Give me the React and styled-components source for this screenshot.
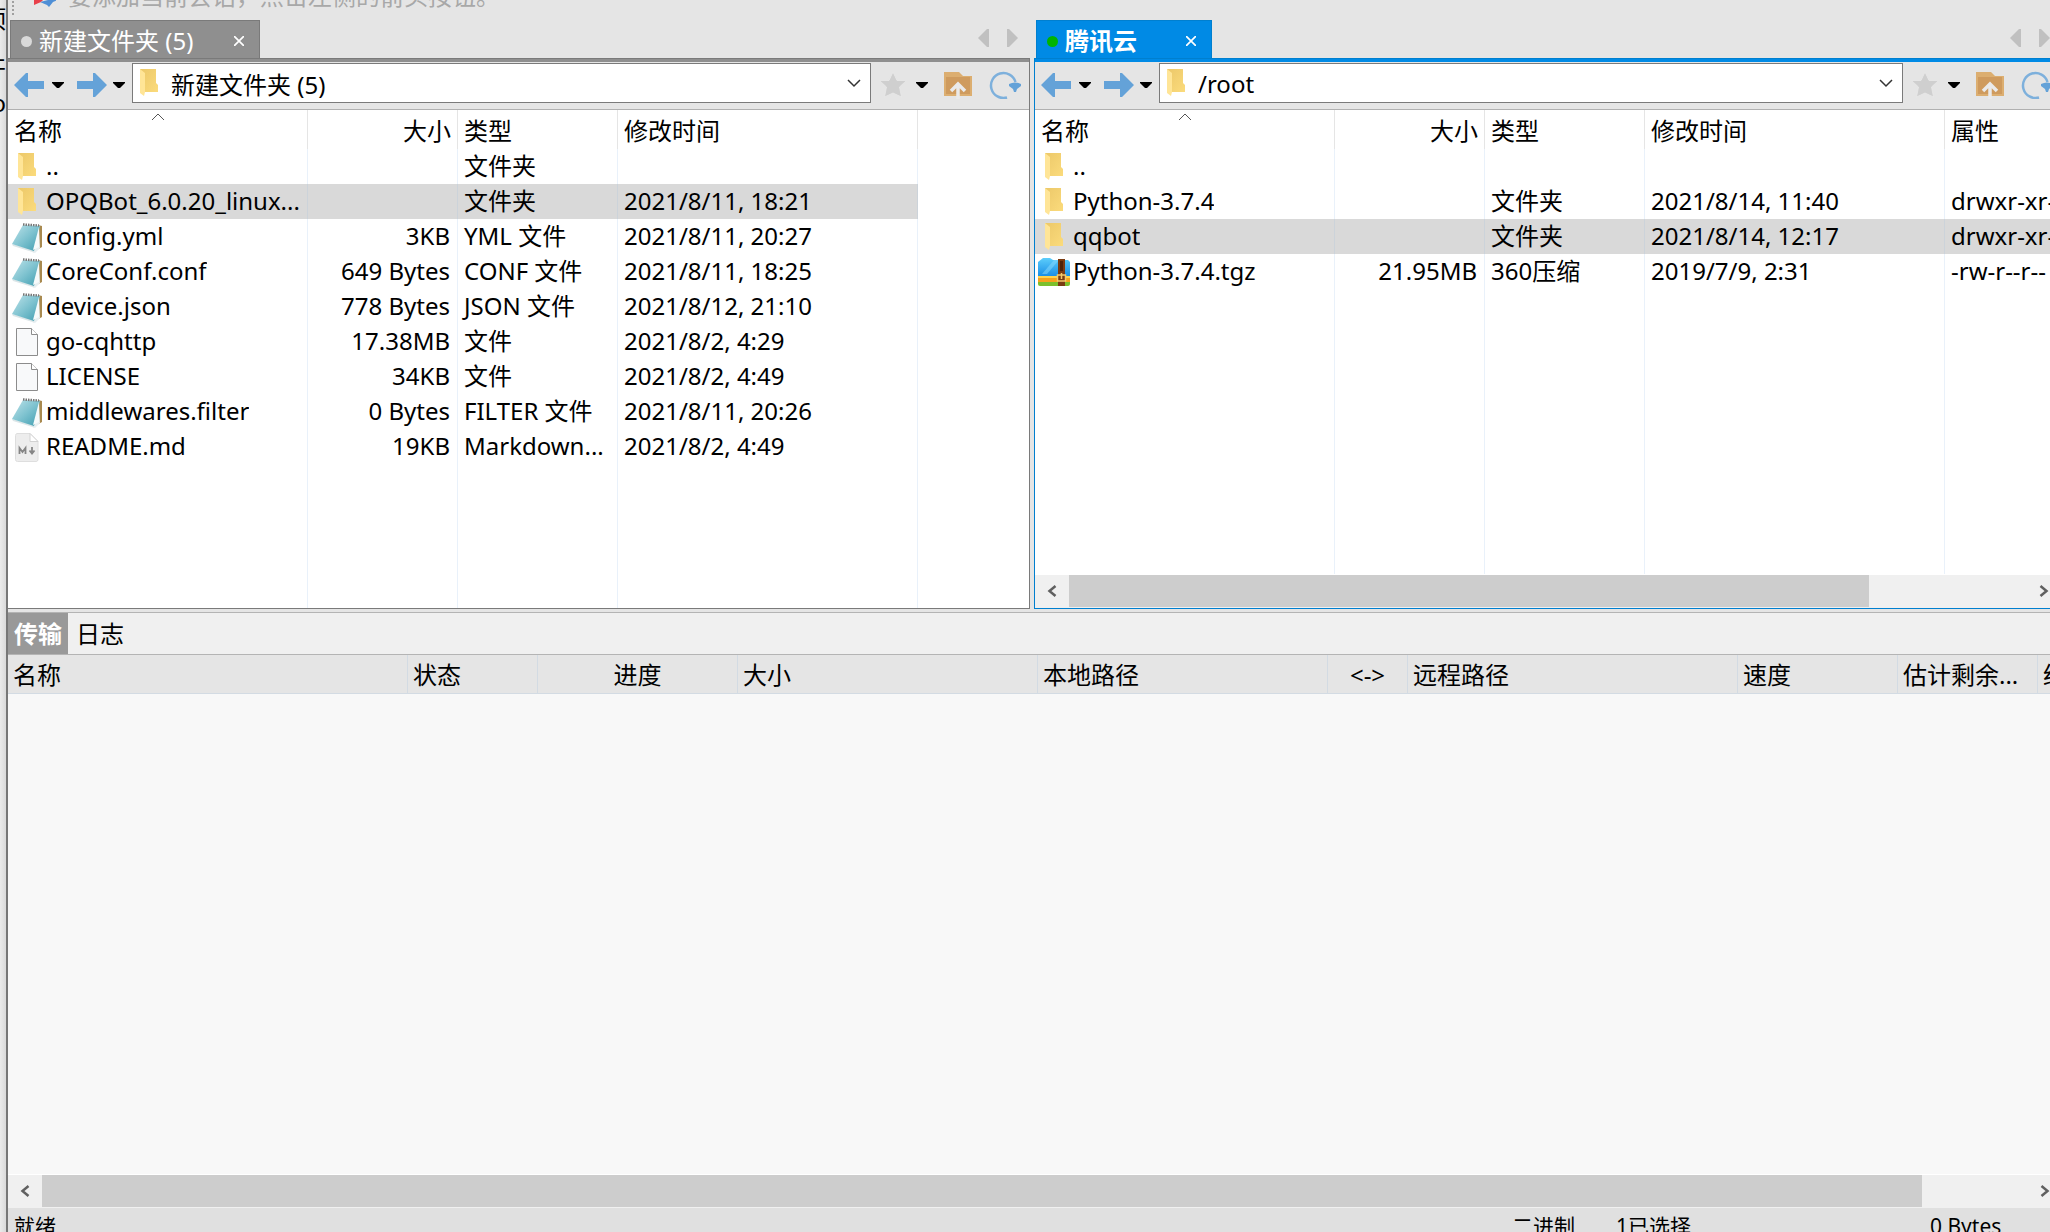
import React from 'react';
import styled, { createGlobalStyle, css } from 'styled-components';

const Global = createGlobalStyle`
  *, *::before, *::after { box-sizing: border-box; }
  html, body, #root { height: 100%; }
  body {
    margin: 0;
    overflow: hidden;
    background: #e5e5e5;
    color: #000;
    font: 24px/32px "Noto Sans", "Noto Sans CJK SC", sans-serif;
  }
  button, input { font: inherit; color: inherit; }
  button { padding: 0; border: 0; background: none; }
  svg { display: block; flex: none; }
`;

const Screen = styled.div`
  display: flex;
  height: 100%;
  overflow: hidden;
`;

const Backdrop = styled.div`
  flex: none;
  width: 6px;
  height: 100%;
  overflow: hidden;
  background: linear-gradient(90deg, #ebebeb, #dadada);
  direction: rtl;
`;

const BackdropGlyph = styled.div`
  height: ${(p) => p.$height}px;
  line-height: ${(p) => p.$height}px;
  white-space: nowrap;
`;

const Window = styled.div`
  flex: none;
  display: flex;
  flex-direction: column;
  width: calc(100% + 6px);
  height: calc(100% + 12px);
  border-left: 2px solid #777;
  background: #e5e5e5;
`;

const Notice = styled.div`
  flex: none;
  display: flex;
  align-items: flex-end;
  gap: 12px;
  height: 20px;
  padding: 0 4px;
  overflow: hidden;
  color: #a8a8a8;
`;

const NoticeText = styled.span`
  height: 32px;
  margin-bottom: 8px;
`;

const Panes = styled.div`
  flex: none;
  display: grid;
  grid-template-columns: calc(50% - 5px) 1fr;
  gap: 4px;
  height: 589px;
`;

const Pane = styled.section`
  --line: ${(p) => (p.$active ? '#007fcf' : '#7a7a7a')};
  --fill: ${(p) => (p.$active ? '#008ae5' : '#8f8f8f')};
  display: flex;
  flex-direction: column;
  min-width: 0;
`;

const TabStrip = styled.div`
  flex: none;
  display: flex;
  justify-content: space-between;
  align-items: flex-start;
  height: 38px;
  padding: 0 12px 0 2px;
`;

const Tab = styled.div`
  display: flex;
  align-items: center;
  gap: 7px;
  width: ${(p) => p.$width}px;
  height: 38px;
  padding: 3px 15px 0 10px;
  border: 1px solid var(--line);
  border-bottom: 0;
  background: var(--fill);
  color: #fff;
  font-weight: ${(p) => (p.$bold ? 700 : 400)};
`;

const Dot = styled.span`
  width: 11px;
  height: 11px;
  border-radius: 50%;
  background: ${(p) => p.$color};
`;

const TabClose = styled.button`
  margin-left: auto;
`;

const Pager = styled.div`
  display: flex;
  gap: 18px;
  padding-top: 9px;
`;

const PaneBody = styled.div`
  flex: 1;
  display: flex;
  flex-direction: column;
  min-height: 0;
  border: 1px solid var(--line);
  border-left-width: ${(p) => (p.$active ? 1 : 0)}px;
`;

const Accent = styled.div`
  flex: none;
  height: 3px;
  background: var(--fill);
`;

const Toolbar = styled.div`
  flex: none;
  display: flex;
  align-items: center;
  height: 48px;
  padding: 1px 0 6px 6px;
  border-bottom: 1px solid #b0b0b0;
`;

const ToolButton = styled.button`
  flex: none;
  display: grid;
  place-items: center;
  width: ${(p) => p.$width}px;
  height: 40px;
  padding-top: 4px;
`;

const Address = styled.div`
  flex: 1;
  display: flex;
  align-items: center;
  gap: 12px;
  min-width: 0;
  height: 40px;
  margin: 0 7px 0 6px;
  padding: 0 9px 0 6px;
  border: 1px solid #7a7a7a;
  background: #fff;
`;

const AddressInput = styled.input`
  flex: 1;
  min-width: 0;
  height: 36px;
  padding: 0;
  border: 0;
  outline: 0;
  background: transparent;
`;

const List = styled.div`
  flex: 1;
  min-height: 0;
  overflow: hidden;
  background: #fff;
`;

const FileTable = styled.table`
  width: 100%;
  height: 100%;
  table-layout: fixed;
  border-collapse: separate;
  border-spacing: 0;
`;

const cell = css`
  overflow: hidden;
  padding: 0 6px;
  text-align: left;
  font-weight: 400;
  white-space: nowrap;
  text-overflow: ellipsis;
`;

const HeadCell = styled.th`
  ${cell}
  height: 39px;
  padding-top: 2px;
  border-right: ${(p) => (p.$last ? 0 : 1)}px solid #e5e5e5;
  text-align: ${(p) => p.$align || 'left'};
`;

const HeadLabel = styled.div`
  position: relative;
`;

const SortMark = styled.svg`
  position: absolute;
  left: 50%;
  top: -2px;
  transform: translateX(-50%);
`;

const Row = styled.tr`
  --bg: ${(p) => (p.$selected ? '#d9d9d9' : '#fff')};
`;

const Cell = styled.td`
  ${cell}
  height: ${(p) => (p.$filler ? 'auto' : '35px')};
  padding-right: ${(p) => (p.$align ? 7 : 2)}px;
  padding-bottom: 2px;
  border-right: ${(p) => (p.$last ? 0 : 1)}px solid ${(p) => (p.$selected ? '#ccd3da' : '#e9f1fa')};
  background: ${(p) => (p.$last && !p.$wide ? '#fff' : 'var(--bg)')};
  text-align: ${(p) => p.$align || 'left'};
  text-overflow: ${(p) => (p.$last ? 'clip' : 'ellipsis')};
`;

const NameCell = styled.div`
  display: flex;
  align-items: center;
  gap: 3px;
  margin-left: -3px;
`;

const IconSlot = styled.span`
  flex: none;
  display: grid;
  place-items: center;
  width: 32px;
  height: 32px;
  padding-top: 3px;
`;

const FileName = styled.span`
  overflow: hidden;
  text-overflow: ellipsis;
`;

const ScrollTrack = styled.div`
  flex: none;
  display: flex;
  height: 34px;
  padding-bottom: 1px;
  background: #f0f0f0;
  border-top: 1px solid #fff;
`;

const ScrollButton = styled.button`
  flex: none;
  display: grid;
  place-items: center;
  width: 34px;
`;

const ScrollLane = styled.div`
  flex: 1;
`;

const ScrollThumb = styled.div`
  height: 100%;
  background: #cdcdcd;
`;

const Bottom = styled.section`
  flex: 1;
  display: flex;
  flex-direction: column;
  min-height: 0;
  margin-top: 3px;
  border-top: 1px solid #b4b4b4;
  background: #f8f8f8;
`;

const BottomTabs = styled.div`
  flex: none;
  display: flex;
  height: 42px;
  border-bottom: 1px solid #b4b4b4;
  background: #f0f0f0;
`;

const BottomTab = styled.button`
  padding: 0 6px;
  margin-right: 2px;
  background: ${(p) => (p.$active ? '#999' : 'transparent')};
  color: ${(p) => (p.$active ? '#fff' : '#000')};
  font-weight: ${(p) => (p.$active ? 700 : 400)};
`;

const QueueTable = styled.table`
  flex: none;
  width: 100%;
  table-layout: fixed;
  border-collapse: separate;
  border-spacing: 0;
  background: #e5e5e5;
`;

const QueueHead = styled.th`
  ${cell}
  height: 39px;
  padding: 1px 5px 0;
  border-right: 1px solid #d3dbe3;
  border-bottom: 1px solid #d3dbe3;
  text-align: ${(p) => p.$align || 'left'};
`;

const QueueSpace = styled.div`
  flex: 1;
`;

const Status = styled.footer`
  flex: none;
  display: flex;
  height: 36px;
  padding: 2px 6px 0;
  background: #e0e0e0;
  font-size: 21px;
  white-space: nowrap;
`;

const StatusItem = styled.span`
  flex: ${(p) => (p.$width ? 'none' : 1)};
  width: ${(p) => (p.$width ? `${p.$width}px` : 'auto')};
`;

const BackIcon = () => (
  <svg width="30" height="24" viewBox="0 0 30 24" aria-hidden="true">
    <path d="M0 12 12 0h2v8h16v8H14v8h-2z" fill="#64a2d8" />
  </svg>
);

const ForwardIcon = () => (
  <svg width="30" height="24" viewBox="0 0 30 24" aria-hidden="true">
    <path d="M30 12 18 0h-2v8H0v8h16v8h2z" fill="#64a2d8" />
  </svg>
);

const CaretIcon = () => (
  <svg width="12" height="8" viewBox="0 0 12 8" aria-hidden="true">
    <path d="M0 1h12v1L7 7H5L0 2z" fill="#000" />
  </svg>
);

const ChevronIcon = () => (
  <svg width="14" height="9" viewBox="0 0 14 9" aria-hidden="true">
    <path d="M1 1l6 6 6-6" fill="none" stroke="#333" strokeWidth="1.5" />
  </svg>
);

const StarIcon = () => (
  <svg width="28" height="26" viewBox="0 0 28 26" aria-hidden="true">
    <path d="M14 0l4 8.500h9.500l-7 6.500 2 10-8.500-4-8.500 4 2-10-7-6.500H10z" fill="#cfcfcf" stroke="#e8e8e8" strokeWidth=".8" />
  </svg>
);

const FolderUpIcon = () => (
  <svg width="30" height="28" viewBox="0 0 30 28" aria-hidden="true">
    <path d="M1 1h15l4 4h9v20H1z" fill="#dcae70" />
    <path d="M3 6h24v17H3z" fill="#cf9b5e" />
    <path d="M8 20l7-7 7 7M15 13v15" fill="none" stroke="#eaeaea" strokeWidth="3.500" />
  </svg>
);

const RefreshIcon = () => (
  <svg width="32" height="28" viewBox="0 0 32 28" aria-hidden="true">
    <path d="M18 26.500A12.500 12.500 0 1 1 26.500 11" fill="none" stroke="#7db0dc" strokeWidth="2.500" />
    <path d="M20 13q6-3 12 0v2l-4 3-1 3h-2l-1-3-4-3z" fill="#64a2d8" />
  </svg>
);

const CrossIcon = () => (
  <svg width="10" height="10" viewBox="0 0 10 10" aria-hidden="true">
    <path d="M0 0l10 10M10 0L0 10" stroke="#fff" strokeWidth="1.700" />
  </svg>
);

const PagerArrow = ({ right }) => (
  <svg width="11" height="18" viewBox="0 0 11 18" aria-hidden="true">
    <path d={right ? 'M0 0h2l9 9-9 9H0z' : 'M11 0H9L0 9l9 9h2z'} fill="#c0c0c0" />
  </svg>
);

const ScrollArrow = ({ right }) => (
  <svg width="10" height="12" viewBox="0 0 10 12" aria-hidden="true">
    <path d={right ? 'M1.500 1l6 5-6 5' : 'M8.500 1l-6 5 6 5'} fill="none" stroke="#606060" strokeWidth="2.500" />
  </svg>
);

const GripIcon = () => (
  <svg width="4" height="20" viewBox="0 0 4 20" aria-hidden="true">
    <path d="M1 1v16" stroke="#a0a0a0" strokeWidth="2" strokeDasharray="2 2" />
  </svg>
);

const FlagIcon = () => (
  <svg width="28" height="20" viewBox="0 0 28 20" aria-hidden="true">
    <path d="M6 0h9l-2 2-7 3z" fill="#e8404a" />
    <path d="M12 2l8-2h10l-5 2-4 5-2-2z" fill="#4f8fd6" />
  </svg>
);

const FolderIcon = () => (
  <svg width="20" height="28" viewBox="0 0 20 28" aria-hidden="true">
    <defs>
      <linearGradient id="folderBack" x1="0" y1="0" x2="1" y2="1">
        <stop offset="0" stopColor="#ecc869" />
        <stop offset="1" stopColor="#fbdb7c" />
      </linearGradient>
    </defs>
    <path d="M1 0h16v14l2 2v7H4z" fill="url(#folderBack)" />
    <path d="M1 0l5 4v19l-1 4-4-3z" fill="#ffe597" />
  </svg>
);

const NotepadIcon = () => (
  <svg width="32" height="30" viewBox="0 0 32 30" aria-hidden="true">
    <defs>
      <linearGradient id="padFace" x1="0" y1="0" x2="1" y2="1">
        <stop offset="0" stopColor="#bfe3ea" />
        <stop offset="0.5" stopColor="#7fc3d0" />
        <stop offset="1" stopColor="#3f9db0" />
      </linearGradient>
    </defs>
    <path d="M27 2l4 1v21l-7 4z" fill="#a98a50" />
    <path d="M28 4l1 21-5 5-3-1z" fill="#e6eef0" />
    <path d="M1 21l22 6v2.500L2 23z" fill="#dce6e8" />
    <path d="M12 2l17 1-6 25L1 21z" fill="url(#padFace)" />
    <path d="M28 4l-6 23 6-3z" fill="#f6fafa" />
    <path d="M12 1.500l16 1" stroke="#777" strokeWidth="2.500" strokeDasharray="1.500 1" />
  </svg>
);

const FileIcon = () => (
  <svg width="22" height="28" viewBox="0 0 22 28" aria-hidden="true">
    <path d="M.5.5h15l6 6v21H.5z" fill="#f8f9fa" stroke="#8c8c8c" />
    <path d="M15.500.5v6h6" fill="#fff" stroke="#8c8c8c" />
  </svg>
);

const MarkdownIcon = () => (
  <svg width="24" height="29" viewBox="0 0 24 29" aria-hidden="true">
    <path d="M2 .5h13l8 8v18a2 2 0 0 1-2 2H2.500a2 2 0 0 1-2-2v-24A2 2 0 0 1 2 .5z" fill="#ededed" stroke="#dedede" />
    <path d="M15 .5v8h8z" fill="#fff" stroke="#d2d2d2" />
    <path d="M4.500 21v-6l3 4 3-4v6M17 14v6M14.500 17.500L17 20.500l2.500-3" fill="none" stroke="#858585" strokeWidth="1.800" />
  </svg>
);

const ArchiveIcon = () => (
  <svg width="32" height="29" viewBox="0 0 32 29" aria-hidden="true">
    <defs>
      <linearGradient id="archiveTop" x1="0" y1="0" x2="0" y2="1">
        <stop offset="0" stopColor="#5ccdfb" />
        <stop offset="1" stopColor="#1b8fe6" />
      </linearGradient>
    </defs>
    <path d="M0 22h32v4a2 2 0 0 1-2 2H2a2 2 0 0 1-2-2z" fill="#7cc02c" />
    <path d="M0 17h32v7H0z" fill="#f6a21c" />
    <path d="M0 18h32v2H0z" fill="#ffd34e" />
    <path d="M0 4l5-4h7l3 2h15l2 2v14H0z" fill="url(#archiveTop)" />
    <path d="M4 16L16 2h5L9 16z" fill="#8adcfd" opacity=".5" />
    <path d="M20 1h7v27h-7z" fill="#7a3b12" />
    <path d="M22 3h3v10h-3z" fill="#4f230a" />
    <path d="M19.500 17h8v6h-8zM23.500 15v6" fill="none" stroke="#f4c96a" strokeWidth="1.500" />
  </svg>
);

const icons = {
  folder: FolderIcon,
  notepad: NotepadIcon,
  file: FileIcon,
  markdown: MarkdownIcon,
  archive: ArchiveIcon,
};

const localFiles = [
  ['folder', '..', '', '文件夹', ''],
  ['folder', 'OPQBot_6.0.20_linux...', '', '文件夹', '2021/8/11, 18:21'],
  ['notepad', 'config.yml', '3KB', 'YML 文件', '2021/8/11, 20:27'],
  ['notepad', 'CoreConf.conf', '649 Bytes', 'CONF 文件', '2021/8/11, 18:25'],
  ['notepad', 'device.json', '778 Bytes', 'JSON 文件', '2021/8/12, 21:10'],
  ['file', 'go-cqhttp', '17.38MB', '文件', '2021/8/2, 4:29'],
  ['file', 'LICENSE', '34KB', '文件', '2021/8/2, 4:49'],
  ['notepad', 'middlewares.filter', '0 Bytes', 'FILTER 文件', '2021/8/11, 20:26'],
  ['markdown', 'README.md', '19KB', 'Markdown...', '2021/8/2, 4:49'],
];

const remoteFiles = [
  ['folder', '..', '', '', '', ''],
  ['folder', 'Python-3.7.4', '', '文件夹', '2021/8/14, 11:40', 'drwxr-xr-x'],
  ['folder', 'qqbot', '', '文件夹', '2021/8/14, 12:17', 'drwxr-xr-x'],
  ['archive', 'Python-3.7.4.tgz', '21.95MB', '360压缩', '2019/7/9, 2:31', '-rw-r--r--'],
];

const queueColumns = [
  ['名称', 400],
  ['状态', 130],
  ['进度', 200, 'center'],
  ['大小', 300],
  ['本地路径', 290],
  ['<->', 80, 'center'],
  ['远程路径', 330],
  ['速度', 160],
  ['估计剩余...', 140],
  ['经过时间', null],
];

function FileList({ files, selected, last }) {
  const widths = [300, 150, 160, 300];
  return (
    <List>
      <FileTable>
        <colgroup>
          {widths.map((w, i) => (
            <col key={i} width={w} />
          ))}
          <col />
        </colgroup>
        <thead>
          <tr>
            <HeadCell>
              <HeadLabel>
                名称
                <SortMark width="14" height="8" viewBox="0 0 14 8" aria-hidden="true">
                  <path d="M1 7l6-6 6 6" fill="none" stroke="#555" />
                </SortMark>
              </HeadLabel>
            </HeadCell>
            <HeadCell $align="right">大小</HeadCell>
            <HeadCell>类型</HeadCell>
            <HeadCell>修改时间</HeadCell>
            <HeadCell $last>{last}</HeadCell>
          </tr>
        </thead>
        <tbody>
          {files.map(([kind, name, size, type, date, attrs], i) => {
            const Icon = icons[kind];
            const on = i === selected;
            return (
              <Row key={name} $selected={on}>
                <Cell $selected={on}>
                  <NameCell>
                    <IconSlot>
                      <Icon />
                    </IconSlot>
                    <FileName>{name}</FileName>
                  </NameCell>
                </Cell>
                <Cell $selected={on} $align="right">{size}</Cell>
                <Cell $selected={on}>{type}</Cell>
                <Cell $selected={on}>{date}</Cell>
                <Cell $last $wide={Boolean(last)}>{attrs}</Cell>
              </Row>
            );
          })}
          <tr aria-hidden="true">
            <Cell $filler />
            <Cell $filler />
            <Cell $filler />
            <Cell $filler />
            <Cell $filler $last />
          </tr>
        </tbody>
      </FileTable>
    </List>
  );
}

function ScrollBar({ visible, total }) {
  return (
    <ScrollTrack>
      <ScrollButton aria-label="向左滚动">
        <ScrollArrow />
      </ScrollButton>
      <ScrollLane>
        <ScrollThumb style={{ width: `${(visible / total) * 100}%` }} />
      </ScrollLane>
      <ScrollButton aria-label="向右滚动">
        <ScrollArrow right />
      </ScrollButton>
    </ScrollTrack>
  );
}

function FilePane({ active, title, tabWidth, dot, path, scroll, ...list }) {
  return (
    <Pane $active={active}>
      <TabStrip>
        <Tab $width={tabWidth} $bold={active}>
          <Dot $color={dot} />
          {title}
          <TabClose aria-label="关闭">
            <CrossIcon />
          </TabClose>
        </Tab>
        <Pager>
          <button aria-label="上一个"><PagerArrow /></button>
          <button aria-label="下一个"><PagerArrow right /></button>
        </Pager>
      </TabStrip>
      <PaneBody $active={active}>
        <Accent />
        <Toolbar>
          <ToolButton $width={30} aria-label="后退"><BackIcon /></ToolButton>
          <ToolButton $width={28} aria-label="后退记录"><CaretIcon /></ToolButton>
          <ToolButton $width={40} aria-label="前进"><ForwardIcon /></ToolButton>
          <ToolButton $width={14} aria-label="前进记录"><CaretIcon /></ToolButton>
          <Address>
            <FolderIcon />
            <AddressInput aria-label="路径" defaultValue={path} />
            <button aria-label="展开"><ChevronIcon /></button>
          </Address>
          <ToolButton $width={30} aria-label="收藏"><StarIcon /></ToolButton>
          <ToolButton $width={28} aria-label="收藏列表"><CaretIcon /></ToolButton>
          <ToolButton $width={44} aria-label="上级目录"><FolderUpIcon /></ToolButton>
          <ToolButton $width={49} aria-label="刷新"><RefreshIcon /></ToolButton>
        </Toolbar>
        <FileList {...list} />
        {scroll && <ScrollBar {...scroll} />}
      </PaneBody>
    </Pane>
  );
}

export default function App() {
  return (
    <Screen lang="zh-CN">
      <Global />
      <Backdrop aria-hidden="true">
        <BackdropGlyph $height={38}>顶</BackdropGlyph>
        <BackdropGlyph $height={62}>开</BackdropGlyph>
        <BackdropGlyph $height={6}>o</BackdropGlyph>
      </Backdrop>
      <Window>
        <Notice>
          <GripIcon />
          <FlagIcon />
          <NoticeText>要添加当前会话，点击左侧的箭头按钮。</NoticeText>
        </Notice>
        <Panes>
          <FilePane title="新建文件夹 (5)" tabWidth={250} dot="#d9d9d9" path="新建文件夹 (5)" files={localFiles} selected={1} />
          <FilePane
            active
            title="腾讯云"
            tabWidth={176}
            dot="#00b400"
            path="/root"
            files={remoteFiles}
            selected={2}
            last="属性"
            scroll={{ visible: 1026, total: 1228 }}
          />
        </Panes>
        <Bottom>
          <BottomTabs>
            <BottomTab $active>传输</BottomTab>
            <BottomTab>日志</BottomTab>
          </BottomTabs>
          <QueueTable>
            <colgroup>
              {queueColumns.map(([label, w]) => (
                <col key={label} width={w || undefined} />
              ))}
            </colgroup>
            <thead>
              <tr>
                {queueColumns.map(([label, , align]) => (
                  <QueueHead key={label} $align={align}>{label}</QueueHead>
                ))}
              </tr>
            </thead>
          </QueueTable>
          <QueueSpace />
          <ScrollBar visible={2054} total={2170} />
          <Status>
            <StatusItem>就绪</StatusItem>
            <StatusItem $width={104}>二进制</StatusItem>
            <StatusItem $width={314}>1已选择</StatusItem>
            <StatusItem $width={126}>0 Bytes</StatusItem>
          </Status>
        </Bottom>
      </Window>
    </Screen>
  );
}
